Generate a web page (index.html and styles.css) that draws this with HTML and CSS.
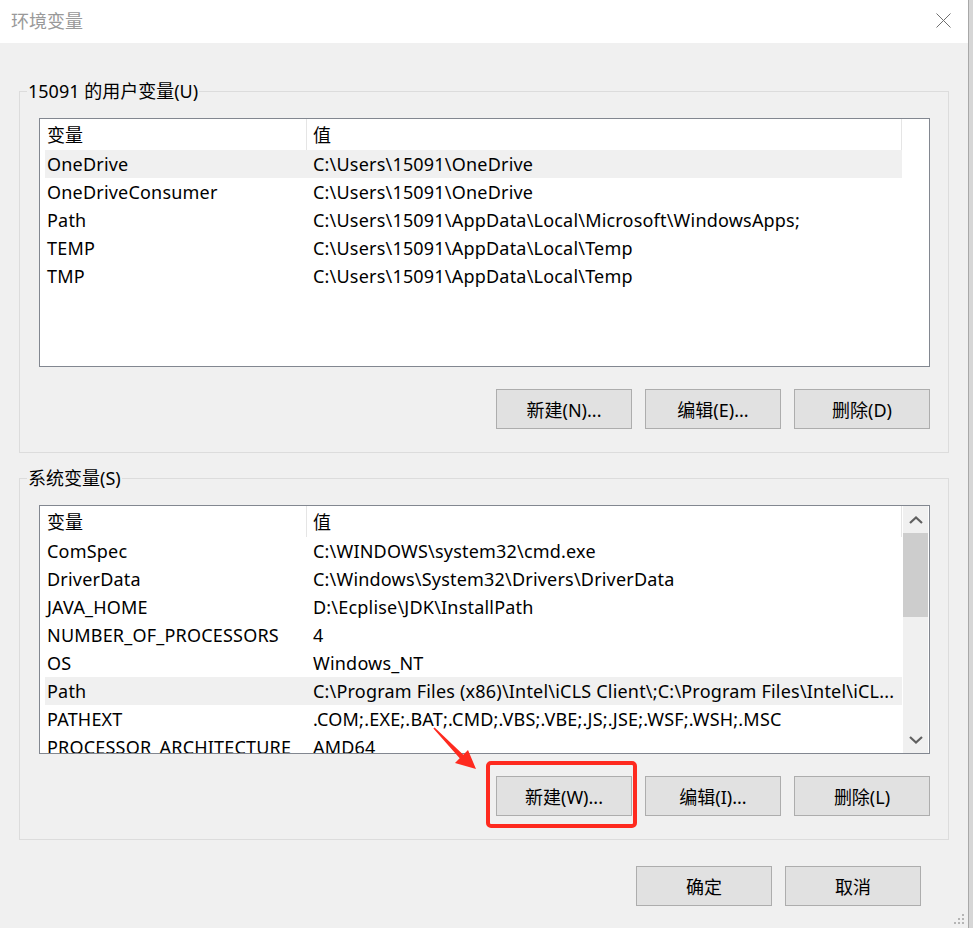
FILE: index.html
```html
<!DOCTYPE html>
<html>
<head>
  <meta charset="UTF-8" />
  <title>环境变量</title>
  <link rel="stylesheet" href="styles.css">
</head>
<body>
  <div class="window">
    <!-- Title bar -->
    <div class="titlebar">
      <span class="title">环境变量</span>
      <svg class="close" width="15" height="15" viewBox="0 0 15 15">
        <path d="M0.5 0.5 L14.5 14.5 M14.5 0.5 L0.5 14.5" stroke="#6f6f6f" stroke-width="1" fill="none" />
      </svg>
    </div>

    <div class="content">
      <!-- User variables -->
      <fieldset class="group group-user">
        <legend>15091 的用户变量(U)</legend>
        <div class="list">
          <div class="list-main">
            <div class="list-head">
              <div class="cell">变量</div>
              <div class="cell">值</div>
            </div>
            <div class="row selected">
              <div class="cell">OneDrive</div>
              <div class="cell">C:\Users\15091\OneDrive</div>
            </div>
            <div class="row">
              <div class="cell">OneDriveConsumer</div>
              <div class="cell">C:\Users\15091\OneDrive</div>
            </div>
            <div class="row">
              <div class="cell">Path</div>
              <div class="cell">C:\Users\15091\AppData\Local\Microsoft\WindowsApps;</div>
            </div>
            <div class="row">
              <div class="cell">TEMP</div>
              <div class="cell">C:\Users\15091\AppData\Local\Temp</div>
            </div>
            <div class="row">
              <div class="cell">TMP</div>
              <div class="cell">C:\Users\15091\AppData\Local\Temp</div>
            </div>
          </div>
        </div>
        <div class="buttons">
          <button>新建(N)...</button>
          <button>编辑(E)...</button>
          <button>删除(D)</button>
        </div>
      </fieldset>

      <!-- System variables -->
      <fieldset class="group group-system">
        <legend>系统变量(S)</legend>
        <div class="list">
          <div class="list-main">
            <div class="list-head">
              <div class="cell">变量</div>
              <div class="cell">值</div>
            </div>
            <div class="row">
              <div class="cell">ComSpec</div>
              <div class="cell">C:\WINDOWS\system32\cmd.exe</div>
            </div>
            <div class="row">
              <div class="cell">DriverData</div>
              <div class="cell">C:\Windows\System32\Drivers\DriverData</div>
            </div>
            <div class="row">
              <div class="cell">JAVA_HOME</div>
              <div class="cell">D:\Ecplise\JDK\InstallPath</div>
            </div>
            <div class="row">
              <div class="cell">NUMBER_OF_PROCESSORS</div>
              <div class="cell">4</div>
            </div>
            <div class="row">
              <div class="cell">OS</div>
              <div class="cell">Windows_NT</div>
            </div>
            <div class="row selected">
              <div class="cell">Path</div>
              <div class="cell">C:\Program Files (x86)\Intel\iCLS Client\;C:\Program Files\Intel\iCL...</div>
            </div>
            <div class="row">
              <div class="cell">PATHEXT</div>
              <div class="cell">.COM;.EXE;.BAT;.CMD;.VBS;.VBE;.JS;.JSE;.WSF;.WSH;.MSC</div>
            </div>
            <div class="row">
              <div class="cell">PROCESSOR_ARCHITECTURE</div>
              <div class="cell">AMD64</div>
            </div>
          </div>
          <div class="scrollbar">
            <div class="scroll-btn">
              <svg width="14" height="8" viewBox="0 0 14 8"><path d="M1 7 L7 1.5 L13 7" stroke="#606060" stroke-width="2.2" fill="none" /></svg>
            </div>
            <div class="scroll-thumb"></div>
            <div class="scroll-track"></div>
            <div class="scroll-btn">
              <svg width="14" height="8" viewBox="0 0 14 8"><path d="M1 1 L7 6.5 L13 1" stroke="#606060" stroke-width="2.2" fill="none" /></svg>
            </div>
          </div>
        </div>
        <div class="buttons">
          <button>新建(W)...</button>
          <button>编辑(I)...</button>
          <button>删除(L)</button>
        </div>
      </fieldset>

      <!-- Dialog buttons -->
      <div class="buttons dialog-buttons">
        <button>确定</button>
        <button>取消</button>
      </div>
    </div>

    <!-- Annotation drawn over the dialog -->
    <div class="mark-box"></div>
    <svg class="mark-arrow" width="60" height="60" viewBox="0 0 60 60">
      <polygon points="9.6,7.4 38.3,34.8 43,30 51,49 30,43 34.7,38.2 8.4,8.6" fill="#fe2a1f" />
    </svg>

    <!-- Resize grip -->
    <svg class="grip" width="14" height="12" viewBox="0 0 14 12">
      <rect x="10" y="0" width="2" height="2" fill="#b5b5b5" />
      <rect x="6" y="4" width="2" height="2" fill="#b5b5b5" />
      <rect x="10" y="4" width="2" height="2" fill="#b5b5b5" />
      <rect x="2" y="8" width="2" height="2" fill="#b5b5b5" />
      <rect x="6" y="8" width="2" height="2" fill="#b5b5b5" />
      <rect x="10" y="8" width="2" height="2" fill="#b5b5b5" />
    </svg>
  </div>

  <!-- Sliver of the window behind -->
  <div class="backdrop"></div>
</body>
</html>
```

FILE: styles.css
```css
/* Global reset & fonts */
* {
  margin: 0;
  padding: 0;
  box-sizing: border-box;
}
body {
  font-family: 'Noto Sans', 'Noto Sans CJK SC', sans-serif;
  font-size: 18px;
  color: #000000;
  height: 928px;
  display: flex;
  overflow: hidden;
}

/* Dialog window */
.window {
  width: 968px;
  height: 928px;
  background-color: #f0f0f0;
  position: relative;
  flex-shrink: 0;
}

/* Title bar */
.titlebar {
  height: 43px;
  background-color: #ffffff;
  display: flex;
  align-items: center;
  padding: 0 17px 3px 11px;
}
.title {
  color: #999999;
  font-size: 18px;
}
.close {
  margin-left: auto;
}

/* Group boxes */
.group {
  border: 1px solid #dcdcdc;
  margin: 0 19px;
  padding: 15px 18px 23px 19px;
  min-width: 0;
}
.group-user {
  margin-top: 37px;
}
.group-system {
  margin-top: 14px;
}
.group legend {
  line-height: 23px;
  margin-left: -12px;
  padding: 0 1px;
}

/* List views */
.list {
  height: 249px;
  border: 1px solid #828790;
  background-color: #ffffff;
  display: flex;
  overflow: hidden;
}
.list-main {
  width: 862px;
  flex-shrink: 0;
}
.list-head {
  height: 31px;
  display: grid;
  grid-template-columns: 266px 1fr;
  border-right: 1px solid #e5e5e5;
}
.list-head .cell {
  line-height: 32px;
  padding-left: 7px;
}
.list-head .cell + .cell {
  border-left: 1px solid #e5e5e5;
  padding-left: 6px;
}
.row {
  height: 28px;
  margin-left: 5px;
  display: grid;
  grid-template-columns: 261px 1fr;
  letter-spacing: 0.2px;
}
.row.selected {
  background-color: #f0f0f0;
}
.cell {
  line-height: 28px;
  white-space: nowrap;
  overflow: hidden;
}
.row .cell {
  padding-left: 2px;
}
.row .cell + .cell {
  padding-left: 7px;
}

/* Scrollbar of the system list */
.scrollbar {
  width: 25px;
  margin-left: 1px;
  display: flex;
  flex-direction: column;
  background-color: #f0f0f0;
}
.scroll-btn {
  height: 27px;
  display: flex;
  align-items: center;
  justify-content: center;
}
.scroll-thumb {
  height: 84px;
  background-color: #cdcdcd;
}
.scroll-track {
  flex: 1;
}

/* Buttons */
.buttons {
  display: flex;
  justify-content: flex-end;
  gap: 13px;
  margin-top: 22px;
}
button {
  width: 136px;
  height: 40px;
  background-color: #e1e1e1;
  border: 1px solid #adadad;
  font-family: inherit;
  font-size: 18px;
  color: #000000;
}
.dialog-buttons {
  margin-top: 26px;
  padding-right: 47px;
}

/* Red annotation */
.mark-box {
  position: absolute;
  left: 486px;
  top: 761px;
  width: 151px;
  height: 67px;
  border: 4px solid #fe2a1f;
  border-radius: 5px;
}
.mark-arrow {
  position: absolute;
  left: 425px;
  top: 720px;
}

/* Resize grip */
.grip {
  position: absolute;
  right: 2px;
  bottom: 2px;
}

/* Window behind the dialog */
.backdrop {
  flex: 1;
  background-color: #d6d6d6;
  border-left: 1px solid #a8a8a8;
}
```
